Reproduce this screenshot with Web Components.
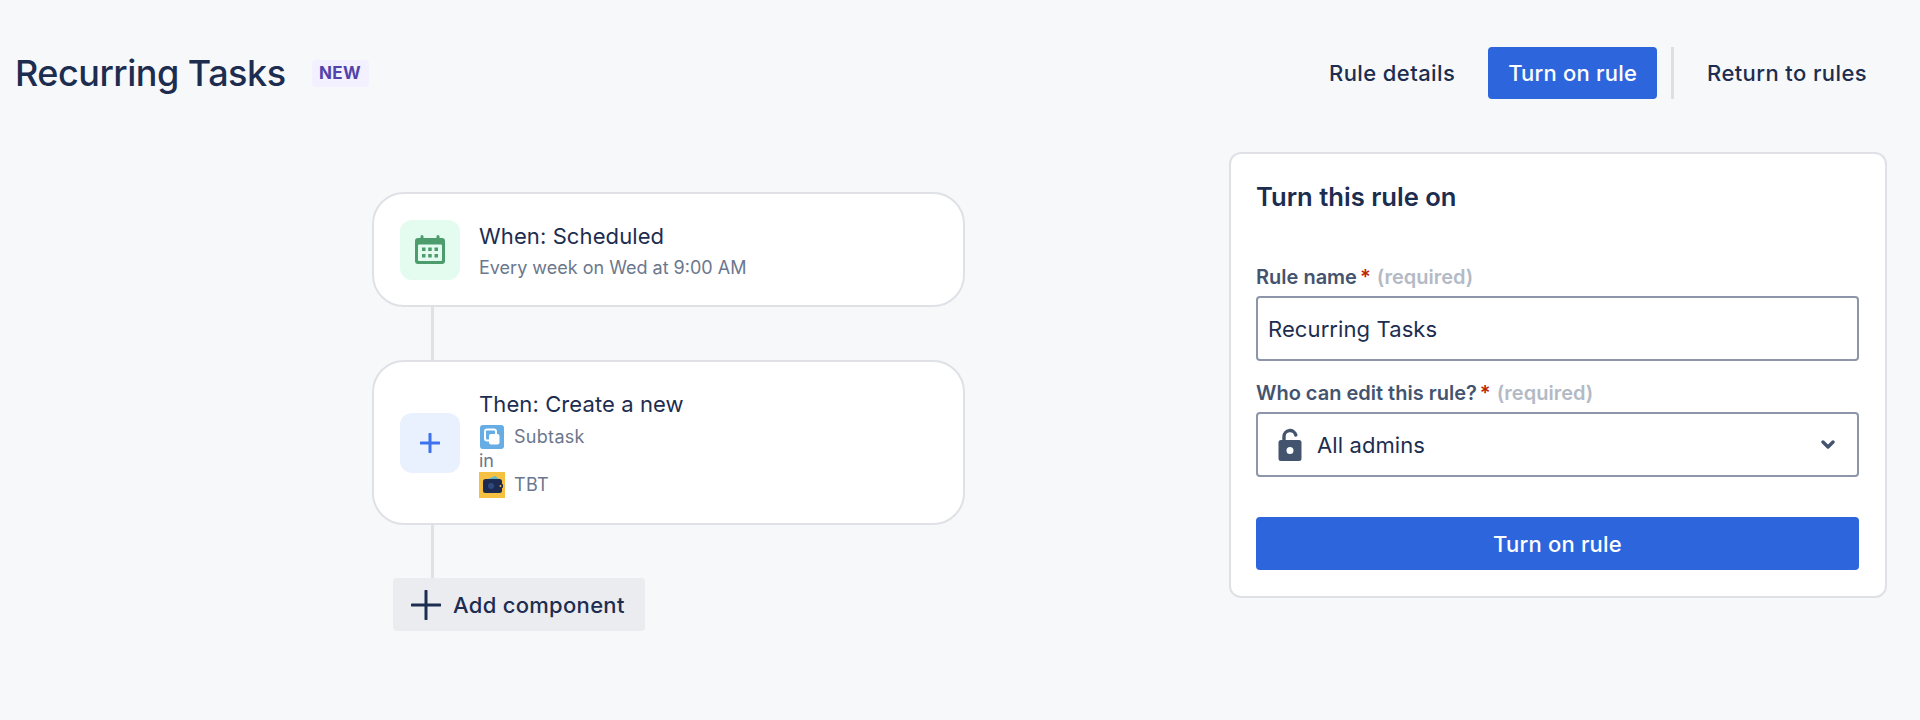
<!doctype html>
<html lang="en">
<head>
<meta charset="utf-8">
<title>Recurring Tasks</title>
<style>
	html, body { margin: 0; height: 720px; overflow: hidden; }
	body {
		background: #f7f8fa;
		color: #1d2d50;
		font-family: Inter, "Liberation Sans", sans-serif;
	}
	main { display: flex; align-items: flex-start; margin-top: 53px; padding-left: 372px; }
</style>
</head>
<body>
<rule-header heading="Recurring Tasks" badge="NEW"></rule-header>
<main>
	<rule-flow>
		<rule-card heading="When: Scheduled" tone="green" icon="calendar">
			<div style="font-size:18px;line-height:24px;color:#6b778c;margin-top:6px">Every week on Wed at 9:00 AM</div>
		</rule-card>
		<flow-line></flow-line>
		<rule-card heading="Then: Create a new" tone="blue" icon="plus" tall>
			<issue-line icon="subtask">Subtask</issue-line>
			<div style="font-size:18px;line-height:24px;color:#6b778c;height:24px">in</div>
			<issue-line icon="wallet">TBT</issue-line>
		</rule-card>
		<flow-line></flow-line>
		<add-component></add-component>
	</rule-flow>
	<turn-on-panel></turn-on-panel>
</main>

<script>
const ICONS = {
	calendar: `<svg width="30" height="29" viewBox="0 0 30 29"><path fill="#4c9c6e" d="M5.500 1.500a1.500 1.500 0 0 1 3 0V3h13V1.500a1.500 1.500 0 0 1 3 0V3h2.500A3 3 0 0 1 30 6v20a3 3 0 0 1-3 3H3a3 3 0 0 1-3-3V6a3 3 0 0 1 3-3h2.500z"/><rect x="3" y="9.500" width="24" height="16.500" rx="1" fill="#e3fcef"/><g fill="#4c9c6e"><rect x="7" y="12.500" width="3.500" height="3.500"/><rect x="13.200" y="12.500" width="3.500" height="3.500"/><rect x="19.500" y="12.500" width="3.500" height="3.500"/><rect x="7" y="19" width="3.500" height="3.500"/><rect x="13.200" y="19" width="3.500" height="3.500"/><rect x="19.500" y="19" width="3.500" height="3.500"/></g></svg>`,
	plus: `<svg width="20" height="20" viewBox="0 0 20 20"><path d="M10 1v18M1 10h18" stroke="#3d72ee" stroke-width="3" stroke-linecap="round" fill="none"/></svg>`,
	subtask: `<svg width="24" height="24" viewBox="0 0 24 24"><rect width="24" height="24" rx="3" fill="#65ade4"/><rect x="5" y="4.500" width="11" height="11" rx="2" fill="none" stroke="#fff" stroke-width="2"/><rect x="9" y="9" width="10.500" height="10.500" rx="2" fill="#fff"/></svg>`,
	wallet: `<svg width="26" height="26" viewBox="0 0 26 26"><rect width="26" height="26" fill="#f6c142"/><path d="M9 7l7-3 4 3z" fill="#5fb5c9"/><rect x="4" y="7" width="19" height="14" rx="2.500" fill="#1c2b4f"/><circle cx="12" cy="14" r="3" fill="#2d4a80"/><rect x="20" y="12" width="4" height="4" rx="1" fill="#1c2b4f"/><circle cx="21.500" cy="14" r="1" fill="#f6c142"/></svg>`,
	lock: `<svg width="24" height="33" viewBox="0 0 24 33"><path d="M6 13V8.500a6 6 0 0 1 11.800-1.500" fill="none" stroke="#44546f" stroke-width="3.400" stroke-linecap="round"/><path fill="#44546f" fill-rule="evenodd" d="M3 12h18a2.500 2.500 0 0 1 2.500 2.500v16A2.500 2.500 0 0 1 21 33H3a2.500 2.500 0 0 1-2.500-2.500v-16A2.500 2.500 0 0 1 3 12zm9 7a3.500 3.500 0 1 0 0 7 3.500 3.500 0 0 0 0-7z"/></svg>`,
	chevron: `<svg width="14" height="10" viewBox="0 0 14 10"><path d="M2 2l5 5 5-5" fill="none" stroke="#44546f" stroke-width="3.400" stroke-linecap="round" stroke-linejoin="round"/></svg>`,
	addPlus: `<svg width="30" height="30" viewBox="0 0 30 30"><path d="M15 1v28M1 15h28" stroke="#1d2d50" stroke-width="3" stroke-linecap="round" fill="none"/></svg>`,
};

class RuleHeader extends HTMLElement {
	constructor() {
		super();
		this.attachShadow({ mode: 'open' });
	}

	connectedCallback() {
		this.shadowRoot.innerHTML = `
			<style>
				:host { display: flex; justify-content: space-between; padding: 47px 33px 0 15px; height: 52px; }
				.title { display: flex; align-items: center; gap: 26px; }
				h1 { margin: 0; font: 500 36px/52px Inter, "Liberation Sans", sans-serif; letter-spacing: -.5px; color: #1d2d50; }
				.badge { height: 27px; width: 57px; display: grid; place-items: center; border-radius: 4px; background: #f3f0ff; color: #5243aa; font: 700 17px/1 Inter, "Liberation Sans", sans-serif; letter-spacing: .4px; margin-top: 1px; }
				nav { display: flex; align-items: stretch; }
				.btn { display: flex; align-items: center; padding: 0 20px; font: 500 22px/1 Inter, "Liberation Sans", sans-serif; letter-spacing: .4px; color: #1d2d50; border-radius: 4px; }
				.primary { background: #2d65dc; color: #fff; margin-left: 13px; letter-spacing: .2px; }
				.rule { width: 3px; background: #dcdfe4; margin: 0 13px 0 14px; }
			</style>
			<div class="title"><h1>${this.getAttribute('heading')}</h1><span class="badge">${this.getAttribute('badge')}</span></div>
			<nav>
				<span class="btn">Rule details</span>
				<span class="btn primary">Turn on rule</span>
				<span class="rule"></span>
				<span class="btn">Return to rules</span>
			</nav>`;
	}
}

class RuleFlow extends HTMLElement {
	constructor() {
		super();
		this.attachShadow({ mode: 'open' });
		this.shadowRoot.innerHTML = `
			<style>:host { display: block; width: 593px; margin-top: 40px; }</style>
			<slot></slot>`;
	}
}

class RuleCard extends HTMLElement {
	constructor() {
		super();
		this.attachShadow({ mode: 'open' });
	}

	connectedCallback() {
		const bg = this.getAttribute('tone') === 'green' ? '#e3fcef' : '#e9f0fe';
		this.shadowRoot.innerHTML = `
			<style>
				:host { display: flex; align-items: center; box-sizing: border-box; width: 593px; min-height: 115px; padding: 0 26px; gap: 19px; background: #fff; border: 2px solid #dfe1e6; border-radius: 32px; }
				:host([tall]) { height: 165px; }
				.tile { flex: none; width: 60px; height: 60px; display: grid; place-items: center; border-radius: 12px; background: ${bg}; }
				.text { padding-top: 4px; }
				h3 { margin: -1px 0 0; font: 400 22px/28px Inter, "Liberation Sans", sans-serif; color: #1d2d50; letter-spacing: .1px; }
				:host([tall]) h3 { margin-bottom: 7px; margin-top: -3px; }
				svg { display: block; }
			</style>
			<div class="tile">${ICONS[this.getAttribute('icon')]}</div>
			<div class="text"><h3>${this.getAttribute('heading')}</h3><slot></slot></div>`;
	}
}

class FlowLine extends HTMLElement {
	constructor() {
		super();
		this.attachShadow({ mode: 'open' });
		this.shadowRoot.innerHTML = `
			<style>:host { display: block; width: 3px; height: 53px; margin-left: 59px; background: #dfe1e6; }</style>`;
	}
}

class IssueLine extends HTMLElement {
	constructor() {
		super();
		this.attachShadow({ mode: 'open' });
	}

	connectedCallback() {
		this.shadowRoot.innerHTML = `
			<style>
				:host { display: flex; align-items: center; height: 24px; gap: 10px; font-size: 18px; letter-spacing: .3px; color: #6b778c; }
				svg { display: block; flex: none; }
				.wrap { width: 24px; margin-left: 1px; display: flex; justify-content: center; }
			</style>
			<span class="wrap">${ICONS[this.getAttribute('icon')]}</span><slot></slot>`;
	}
}

class AddComponent extends HTMLElement {
	constructor() {
		super();
		this.attachShadow({ mode: 'open' });
		this.shadowRoot.innerHTML = `
			<style>
				:host { display: flex; align-items: center; box-sizing: border-box; width: 252px; height: 53px; margin-left: 21px; padding-left: 18px; gap: 12px; border-radius: 4px; background: #ebecf0; color: #1d2d50; font: 500 22px/1 Inter, "Liberation Sans", sans-serif; letter-spacing: .3px; }
				svg { display: block; }
			</style>
			${ICONS.addPlus}<span>Add component</span>`;
	}
}

class FormField extends HTMLElement {
	constructor() {
		super();
		this.attachShadow({ mode: 'open' });
	}

	connectedCallback() {
		this.shadowRoot.innerHTML = `
			<style>
				:host { display: block; }
				label { display: flex; height: 24px; align-items: center; font: 600 20px/24px Inter, "Liberation Sans", sans-serif; color: #44546f; margin-bottom: 7px; }
				i { font-style: normal; color: #bf2600; margin: 0 6px 0 3px; }
				em { font-style: normal; color: #b3bac5; }
				.box { box-sizing: border-box; height: 65px; display: flex; align-items: center; gap: 15px; padding: 0 14px 0 10px; background: #fff; border: 2px solid #8c96a8; border-radius: 4px; font: 400 22px/1 Inter, "Liberation Sans", sans-serif; letter-spacing: .1px; color: #1d2d50; }
				:host([select]) .box { padding-left: 20px; }
				::slotted(span) { display: block; flex: none; }
				.end { margin-left: auto; display: flex; padding-right: 8px; }
			</style>
			<label>${this.getAttribute('label')}<i>*</i><em>(required)</em></label>
			<div class="box"><slot name="icon"></slot><span>${this.getAttribute('value')}</span>${this.hasAttribute('select') ? `<span class="end">${ICONS.chevron}</span>` : ''}</div>`;
	}
}

class TurnOnPanel extends HTMLElement {
	constructor() {
		super();
		this.attachShadow({ mode: 'open' });
		this.shadowRoot.innerHTML = `
			<style>
				:host { display: block; box-sizing: border-box; width: 658px; height: 446px; margin-left: 264px; padding: 27px 26px 0 25px; background: #fff; border: 2px solid #dfe1e6; border-radius: 12px; }
				h2 { margin: 0 0 52px; font: 600 25.6px/32px Inter, "Liberation Sans", sans-serif; color: #1d2d50; }
				form-field + form-field { margin-top: 20px; }
				.go { display: grid; place-items: center; height: 53px; margin-top: 40px; border-radius: 4px; background: #2d65dc; color: #fff; font: 500 22px/1 Inter, "Liberation Sans", sans-serif; letter-spacing: .2px; }
			</style>
			<h2>Turn this rule on</h2>
			<form-field label="Rule name" value="Recurring Tasks"></form-field>
			<form-field label="Who can edit this rule?" value="All admins" select><span slot="icon" style="height:33px">${ICONS.lock}</span></form-field>
			<div class="go">Turn on rule</div>`;
	}
}

customElements.define('rule-header', RuleHeader);
customElements.define('rule-flow', RuleFlow);
customElements.define('rule-card', RuleCard);
customElements.define('flow-line', FlowLine);
customElements.define('issue-line', IssueLine);
customElements.define('add-component', AddComponent);
customElements.define('form-field', FormField);
customElements.define('turn-on-panel', TurnOnPanel);
</script>
</body>
</html>
